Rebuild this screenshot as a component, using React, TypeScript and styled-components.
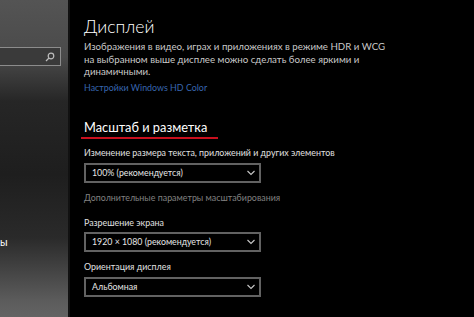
import React from "react";
import styled, { createGlobalStyle } from "styled-components";

const Global = createGlobalStyle`
  html, body { margin: 0; padding: 0; background: #000; }
  body { font-family: "Lato", "Noto Sans", sans-serif; overflow: hidden; }
`;

const Page = styled.div`
  display: flex;
  width: 474px;
  height: 317px;
  background: #000;
  overflow: hidden;
`;

const Sidebar = styled.div`
  width: 70px;
  flex-shrink: 0;
  border-right: 2px solid #111;
  background: linear-gradient(
    to bottom,
    #545454 0%,
    #4a4a4a 18%,
    #262626 32%,
    #1e1e1e 55%,
    #2a2a2a 75%,
    #5c5c5c 95%,
    #636363 100%
  );
  display: flex;
  flex-direction: column;
  padding-top: 47px;
  box-sizing: border-box;
`;

const Search = styled.div`
  width: 61px;
  height: 19px;
  box-sizing: border-box;
  border: 1px solid #8c8c8c;
  border-left: none;
  background: #3a3a3a;
  display: flex;
  align-items: center;
  justify-content: flex-end;
  padding-right: 5px;
`;

const NavItem = styled.div`
  margin-top: 170px;
  color: #fff;
  font-size: 10.5px;
  line-height: 13px;
`;

const Main = styled.div`
  flex: 1;
  padding: 15px 0 0 14px;
  color: #fff;
`;

const Title = styled.h1`
  margin: 0;
  font-weight: 300;
  font-size: 17.6px;
  line-height: 24px;
  color: #fff;
`;

const Desc = styled.p`
  margin: 1px 0 0;
  font-size: 9.7px;
  line-height: 12.5px;
  white-space: nowrap;
  color: #c9c9c9;
`;

const Link = styled.a`
  display: block;
  margin-top: 3px;
  font-size: 8.9px;
  line-height: 13px;
  color: #3866b0;
  text-decoration: none;
`;

const Section = styled.h2`
  margin: 24px 0 0 -3px;
  padding: 0 0 1px 3px;
  width: 134px;
  white-space: nowrap;
  font-weight: 400;
  font-size: 12.8px;
  line-height: 18px;
  color: #fff;
  border-bottom: 2px solid #c8101e;
`;

const Label = styled.div<{ $muted?: boolean; $top: number }>`
  margin-top: ${(p) => p.$top}px;
  font-size: 8.9px;
  line-height: 13px;
  white-space: nowrap;
  color: ${(p) => (p.$muted ? "#808080" : "#e0e0e0")};
`;

const Select = styled.div<{ $top: number }>`
  margin-top: ${(p) => p.$top}px;
  width: 177px;
  height: 20px;
  box-sizing: border-box;
  border: 2px solid #626262;
  display: flex;
  align-items: center;
  justify-content: space-between;
  padding: 0 3px 0 6px;
  font-size: 8.8px;
  color: #e6e6e6;
`;

const SearchIcon = () => (
  <svg width="10" height="10" viewBox="0 0 10 10" fill="none" stroke="#bdbdbd" strokeWidth="1.2">
    <circle cx="6" cy="4" r="2.8" />
    <path d="M4 6 L1 9" />
  </svg>
);

const Chevron = () => (
  <svg width="10" height="6" viewBox="0 0 10 6" fill="none" stroke="#c8c8c8" strokeWidth="1.1">
    <path d="M1.5 1 L5 4.5 L8.5 1" />
  </svg>
);

export default function App() {
  return (
    <>
      <Global />
      <Page>
        <Sidebar>
          <Search>
            <SearchIcon />
          </Search>
          <NavItem>ы</NavItem>
        </Sidebar>
        <Main>
          <Title>Дисплей</Title>
          <Desc>
            Изображения в видео, играх и приложениях в режиме HDR и WCG
            <br />
            на выбранном выше дисплее можно сделать более яркими и
            <br />
            динамичными.
          </Desc>
          <Link>Настройки Windows HD Color</Link>
          <Section>Масштаб и разметка</Section>
          <Label $top={7}>Изменение размера текста, приложений и других элементов</Label>
          <Select $top={4}>
            <span>100% (рекомендуется)</span>
            <Chevron />
          </Select>
          <Label $top={8} $muted>Дополнительные параметры масштабирования</Label>
          <Label $top={12}>Разрешение экрана</Label>
          <Select $top={3}>
            <span>1920 × 1080 (рекомендуется)</span>
            <Chevron />
          </Select>
          <Label $top={8}>Ориентация дисплея</Label>
          <Select $top={4}>
            <span>Альбомная</span>
            <Chevron />
          </Select>
        </Main>
      </Page>
    </>
  );
}
